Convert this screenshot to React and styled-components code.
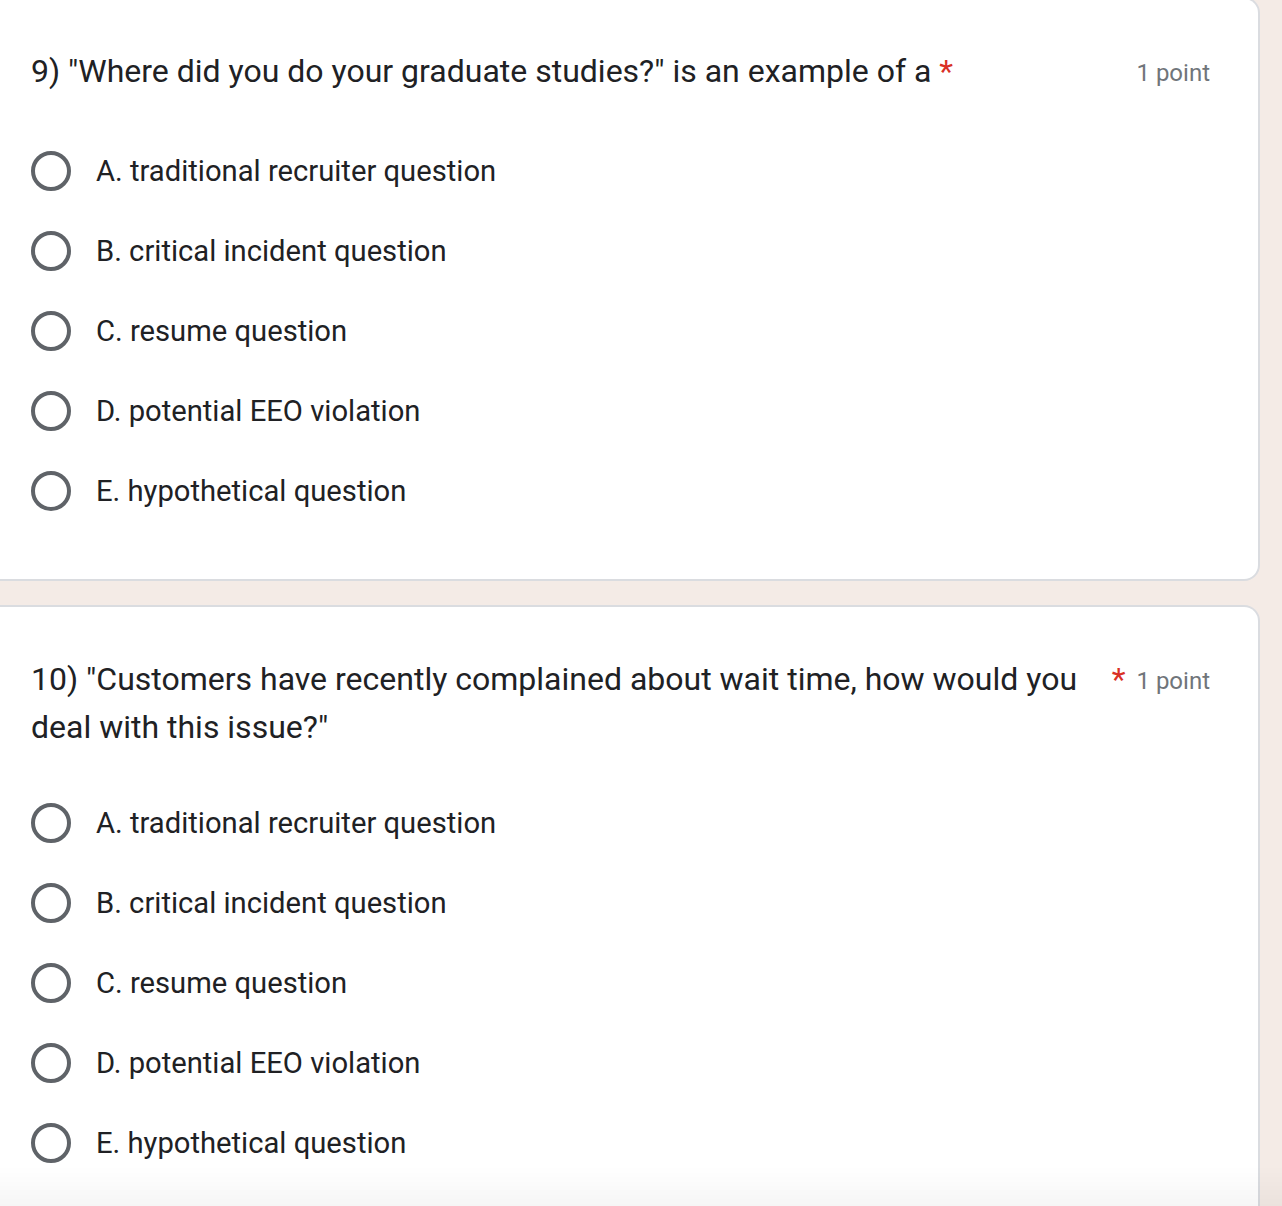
import React from "react";
import styled, { createGlobalStyle } from "styled-components";

const Global = createGlobalStyle`
  html, body { margin: 0; padding: 0; }
  body {
    background: #f4ebe6;
    font-family: Roboto, "Liberation Sans", Arial, sans-serif;
    color: #202124;
    overflow: hidden;
  }
`;

const Page = styled.div`
  display: flex;
  flex-direction: column;
  gap: 24px;
  width: 1260px;
  margin-top: -3px;
`;

const Card = styled.section`
  background: #fff;
  border: 2px solid #dadce0;
  border-left: none;
  border-radius: 0 16px 16px 0;
  padding: 48px 48px 48px 31px;
`;

const Header = styled.div`
  display: flex;
  align-items: flex-start;
  min-height: 52px;
  margin-bottom: 32px;
`;

const TitleWrap = styled.div`
  flex: 1 1 auto;
  display: flex;
  align-items: flex-start;
  min-width: 0;
`;

const Title = styled.div`
  font-size: 32px;
  line-height: 48px;
  font-weight: 400;
  color: #202124;
`;

const Required = styled.span`
  flex: none;
  font-size: 32px;
  line-height: 48px;
  color: #d93025;
  padding-left: 8px;
`;

const Points = styled.div`
  flex: none;
  margin-left: 11px;
  padding-top: 2px;
  font-size: 24px;
  line-height: 48px;
  color: #70757a;
`;

const Options = styled.div`
  display: flex;
  flex-direction: column;
`;

const Option = styled.label`
  display: flex;
  align-items: center;
  height: 80px;
  cursor: pointer;
`;

const Radio = styled.span`
  flex: none;
  box-sizing: border-box;
  width: 40px;
  height: 40px;
  border: 4px solid #5f6368;
  border-radius: 50%;
  margin-right: 25px;
`;

const OptionText = styled.span`
  font-size: 29.2px;
  line-height: 40px;
  color: #202124;
`;

const BottomFade = styled.div`
  position: fixed;
  left: 0;
  right: 0;
  bottom: 0;
  height: 40px;
  pointer-events: none;
  background: linear-gradient(to bottom, rgba(0, 0, 0, 0), rgba(0, 0, 0, 0.035));
`;

const choices = [
  "A. traditional recruiter question",
  "B. critical incident question",
  "C. resume question",
  "D. potential EEO violation",
  "E. hypothetical question",
];

const questions = [
  {
    title: '9) "Where did you do your graduate studies?" is an example of a',
  },
  {
    title:
      '10) "Customers have recently complained about wait time, how would you deal with this issue?"',
  },
];

function Question({ title }) {
  return (
    <Card>
      <Header>
        <TitleWrap>
          <Title>{title}</Title>
          <Required>*</Required>
        </TitleWrap>
        <Points>1 point</Points>
      </Header>
      <Options>
        {choices.map((c) => (
          <Option key={c}>
            <Radio />
            <OptionText>{c}</OptionText>
          </Option>
        ))}
      </Options>
    </Card>
  );
}

export default function App() {
  return (
    <>
      <Global />
      <Page>
        {questions.map((q) => (
          <Question key={q.title} title={q.title} />
        ))}
      </Page>
      <BottomFade />
    </>
  );
}
